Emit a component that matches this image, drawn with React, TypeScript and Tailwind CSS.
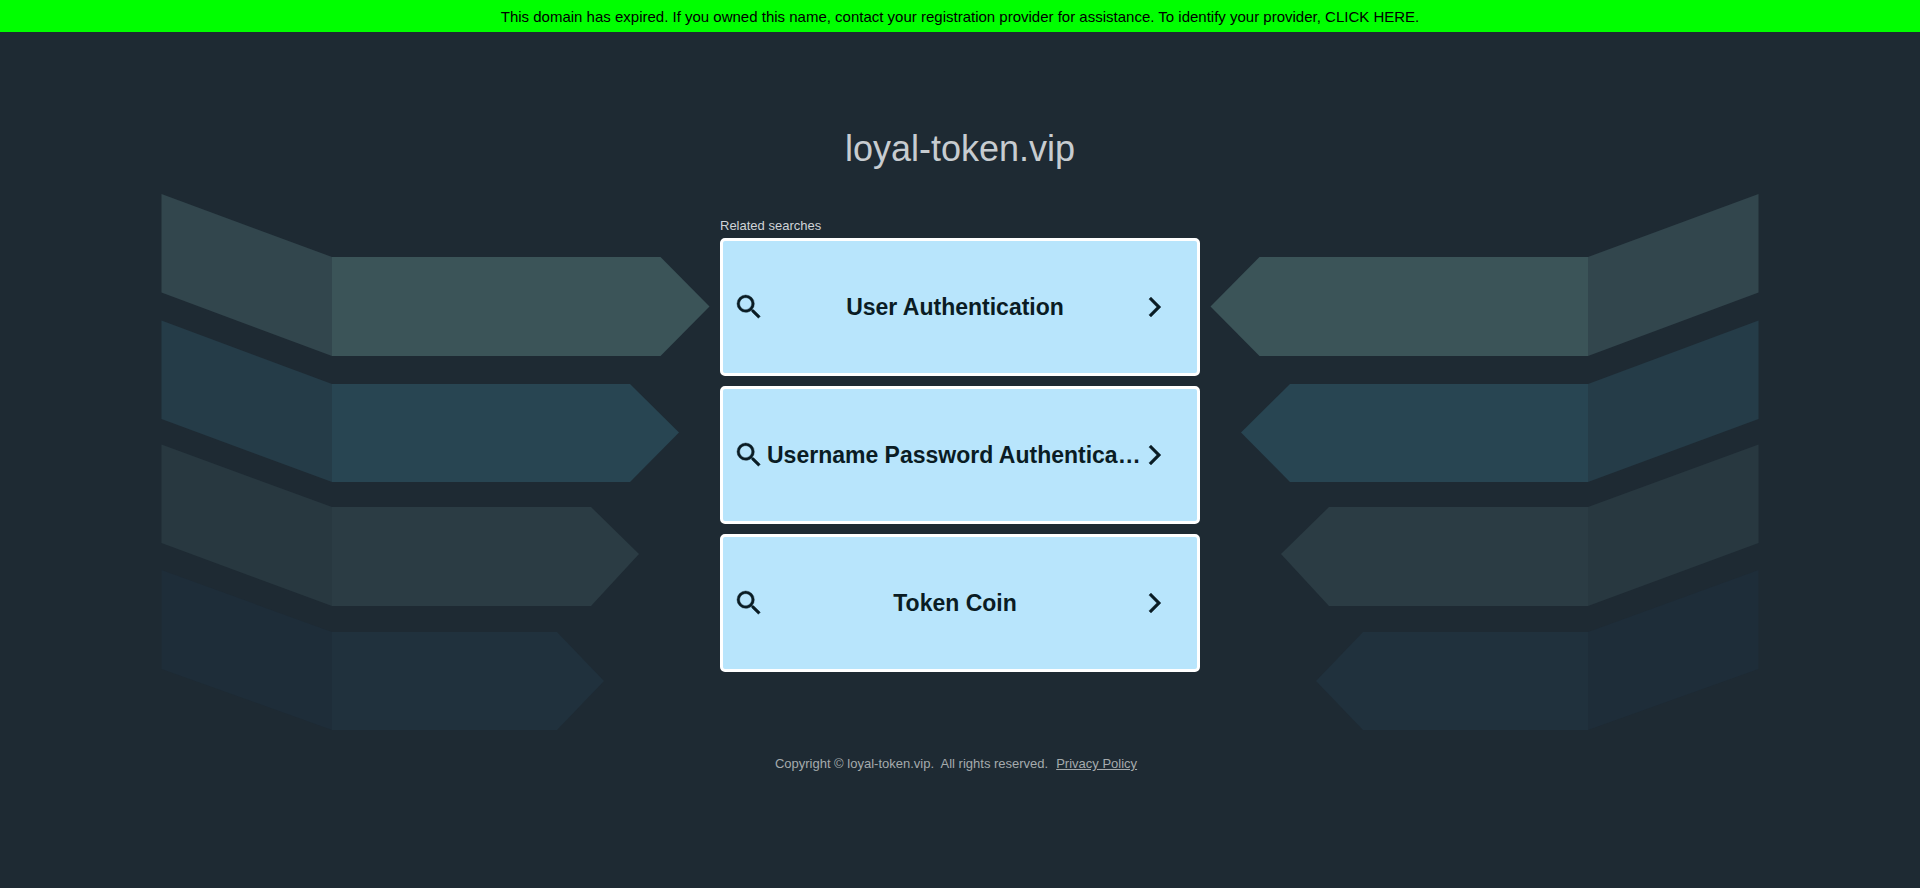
const searches = ['User Authentication', 'Username Password Authentication', 'Token Coin'];

// One ribbon per row: folded side panel, then the arrow body
const ribbons = [
  { side: '.5,0 171,63 171,162 .5,98.5', body: '171,63 499.5,63 548.5,112.5 499.5,162 171,162', sideColor: '#32464d', bodyColor: '#3b5458' },
  { side: '.5,126.5 171,190 171,288 .5,225', body: '171,190 469,190 518,238.5 469,288 171,288', sideColor: '#253c48', bodyColor: '#284552' },
  { side: '.5,250.5 171,313 171,412 .5,349', body: '171,313 430,313 478,360 430,412 171,412', sideColor: '#283840', bodyColor: '#2b3c44' },
  { side: '.5,376 171,438 171,536 .5,475', body: '171,438 396,438 443,487 396,536 171,536', sideColor: '#1e2d39', bodyColor: '#20313d' },
];

function Ribbons() {
  return (
    <g>
      {ribbons.map((r) => (
        <g key={r.side}>
          <polygon points={r.side} fill={r.sideColor} />
          <polygon points={r.body} fill={r.bodyColor} />
        </g>
      ))}
    </g>
  );
}

function Backdrop() {
  return (
    <div aria-hidden="true" className="pointer-events-none absolute inset-0 flex justify-center overflow-hidden pt-[162px]">
      <svg width="1598" height="537" viewBox="0 0 1598 537" className="shrink-0">
        <Ribbons />
        <g transform="translate(1598 0) scale(-1 1)">
          <Ribbons />
        </g>
      </svg>
    </div>
  );
}

function SearchIcon() {
  return (
    <svg viewBox="0 0 24 24" className="size-8 shrink-0" fill="currentColor" stroke="currentColor" strokeWidth=".3" aria-hidden="true">
      <path d="M15.5 14h-.79l-.28-.27A6.471 6.471 0 0 0 16 9.5 6.5 6.5 0 1 0 9.5 16c1.61 0 3.09-.59 4.23-1.57l.27.28v.79l5 4.99L20.49 19l-4.99-5zm-6 0C7.01 14 5 11.99 5 9.5S7.01 5 9.5 5 14 7.01 14 9.5 11.99 14 9.5 14z" />
    </svg>
  );
}

function ArrowIcon() {
  return (
    <svg viewBox="0 0 24 24" className="size-6 shrink-0" fill="currentColor" stroke="currentColor" strokeWidth=".3" aria-hidden="true">
      <path d="M5.88 4.12 13.76 12l-7.88 7.88L8 22l10-10L8 2z" />
    </svg>
  );
}

export default function App() {
  return (
    <div className="flex min-h-screen flex-col bg-[#1e2a33] font-['Liberation_Sans',Arial,sans-serif]">
      {/* Expiry notice */}
      <div className="bg-[#00ff00] px-4 pt-[5px] pb-[3px] text-center text-[15px] leading-6 text-black">
        This domain has expired. If you owned this name, contact your registration provider for assistance. To identify
        your provider,{' '}
        <a href="#provider">CLICK HERE</a>.
      </div>

      <div className="relative flex-1">
        <Backdrop />

        <main className="relative mx-auto w-full max-w-[480px] pt-[97px]">
          <h1 className="text-center text-4xl leading-10 text-[#c7ccd0]">loyal-token.vip</h1>

          {/* Related searches */}
          <h2 className="mt-12 pb-[3px] text-[13px] leading-[18px] text-[#d0d4d8]">Related searches</h2>
          <ul className="flex flex-col gap-[10px]">
            {searches.map((term) => (
              <li key={term}>
                <a
                  href="#search"
                  className="flex h-[138px] items-center rounded-[5px] border-[3px] border-white bg-[#b8e5fc] pr-[30px] pl-[10px] text-[#0a1c24]"
                >
                  <SearchIcon />
                  <span className="min-w-0 flex-1 truncate pl-[2px] text-center text-[23px] leading-8 font-bold">{term}</span>
                  <ArrowIcon />
                </a>
              </li>
            ))}
          </ul>
        </main>

        <footer className="relative flex justify-center gap-2 pt-[82px] pr-2 pb-8 text-[13px] leading-5 text-[#a5aaad]">
          <span className="whitespace-pre">Copyright © loyal-token.vip.  All rights reserved.</span>
          <a href="#privacy" className="underline">
            Privacy Policy
          </a>
        </footer>
      </div>
    </div>
  );
}
